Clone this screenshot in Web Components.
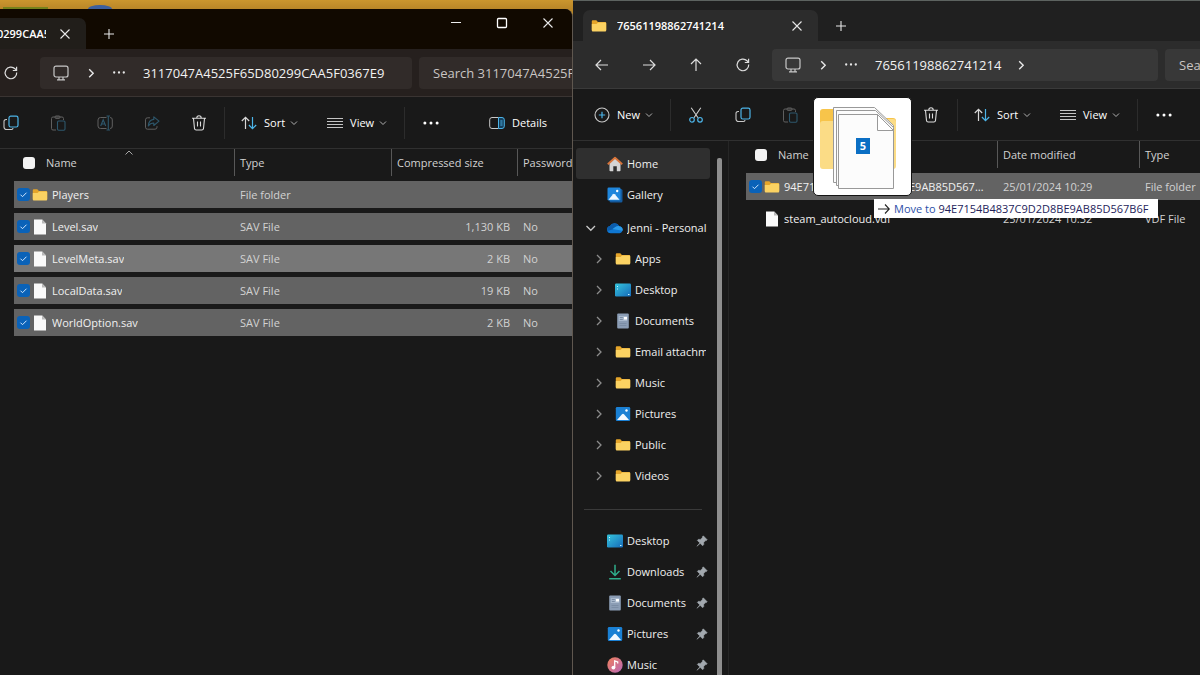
<!DOCTYPE html>
<html lang="en">
<head>
<meta charset="utf-8">
<title>File Explorer</title>
<style>
  html, body { height: 100%; margin: 0; }
  body { background: #191919; color: #e6e6e6; font: 11px/16px "Open Sans", "Noto Sans", sans-serif; overflow: hidden; }
</style>
</head>
<body>
<desktop-view></desktop-view>

<script>
const ICONS = {
  close: ['0 0 16 16', '<path d="M3.5 3.5l9 9M12.5 3.5l-9 9" stroke="#e8e8e8" stroke-width="1.1"/>'],
  plus: ['0 0 16 16', '<path d="M8 3v10M3 8h10" stroke="#e8e8e8" stroke-width="1.1"/>'],
  min: ['0 0 16 16', '<path d="M3 7.500h10" stroke="#eee" stroke-width="1.1"/>'],
  max: ['0 0 16 16', '<rect x="3.5" y="3.5" width="9" height="9" rx="1" stroke="#fff" stroke-width="1.3"/>'],
  back: ['0 0 16 16', '<path d="M14 8H2.5M7 3L2 8l5 5" stroke="#ddd" stroke-width="1.2"/>'],
  forward: ['0 0 16 16', '<path d="M2 8h11.500M9 3l5 5-5 5" stroke="#ddd" stroke-width="1.2"/>'],
  up: ['0 0 16 16', '<path d="M8 14V2.500M3 7l5-5 5 5" stroke="#ddd" stroke-width="1.2"/>'],
  refresh: ['0 0 16 16', '<path d="M13.700 7.500A5.800 5.800 0 1 1 12 3.800L13.500 5.300M13.600 1.700v3.800H9.800" stroke="#ddd" stroke-width="1.2"/>'],
  monitor: ['0 0 16 16', '<rect x="1" y="1.200" width="14" height="10.800" rx="2" stroke="#c8c8c8" stroke-width="1.200"/><path d="M6 12v2.500M10 12v2.500M4 14.900h8" stroke="#c8c8c8" stroke-width="1.200"/>'],
  crumb: ['0 0 16 16', '<path d="M6.200 4.200l4 4-4 4" stroke="#e8e8e8" stroke-width="1.400"/>'],
  dots: ['0 0 16 16', '<g fill="#e8e8e8"><circle cx="3.200" cy="7.500" r="1.150"/><circle cx="8" cy="7.500" r="1.150"/><circle cx="12.800" cy="7.500" r="1.150"/></g>'],
  more: ['0 0 16 16', '<g fill="#fff"><circle cx="1.900" cy="8" r="1.500"/><circle cx="8" cy="8" r="1.500"/><circle cx="14.100" cy="8" r="1.500"/></g>'],
  newitem: ['0 0 16 16', '<circle cx="8" cy="8" r="7" stroke="#c8c8c8" stroke-width="1.100"/><path d="M8 4.800v6.400M4.800 8h6.400" stroke="#4cb4e8" stroke-width="1.200"/>'],
  cut: ['0 0 16 16', '<path d="M3.200.8l6.800 9.900M12.800.8L6 10.700" stroke="#d0d0d0" stroke-width="1.100"/><circle cx="4" cy="12.800" r="2.300" stroke="#4cb4e8" stroke-width="1.200"/><circle cx="12" cy="12.800" r="2.300" stroke="#4cb4e8" stroke-width="1.200"/>'],
  copy: ['0 0 16 16', '<path d="M4 4.500H3A2 2 0 0 0 1 6.500V12a2.500 2.500 0 0 0 2.500 2.500h5A1.500 1.500 0 0 0 10 13" stroke="#c8c8c8" stroke-width="1.100"/><rect x="6" y="1.200" width="9" height="10.800" rx="1.800" stroke="#4cb4e8" stroke-width="1.200"/>'],
  paste: ['0 0 16 16', '<path d="M6 15H3a1.500 1.500 0 0 1-1.500-1.500V3.500A1.500 1.500 0 0 1 3 2h9a1.500 1.500 0 0 1 1.500 1.500V5" stroke="#c8c8c8"/><rect x="5" y="1" width="5" height="2.400" rx="1" stroke="#c8c8c8"/><rect x="7.500" y="6" width="7.500" height="9.200" rx="1.200" stroke="#4cb4e8" stroke-width="1.100"/>'],
  rename: ['0 0 16 16', '<path d="M9.500 2.500h-6A2.500 2.500 0 0 0 1 5v6a2.500 2.500 0 0 0 2.500 2.500h6M13 2.500A2.300 2.300 0 0 1 15.300 5v6a2.300 2.300 0 0 1-2.300 2.500" stroke="#c8c8c8"/><path d="M3.700 11L6.200 4.800 8.700 11M4.600 9h3.200M11.300 1v14M9.500 1h3.600M9.500 15h3.600" stroke="#4cb4e8" stroke-width="1.100"/>'],
  share: ['0 0 16 16', '<path d="M6 2.800H3.500A2 2 0 0 0 1.500 4.800v7.400a2 2 0 0 0 2 2H11a2 2 0 0 0 2-2v-1" stroke="#c8c8c8"/><path d="M9.800 1.800L15 6.200l-5.200 4.300V8C7 8 5.500 9 4.300 11 4.500 7 6.500 4.700 9.800 4.400z" stroke="#4cb4e8" stroke-width="1.100" stroke-linejoin="round"/>'],
  trash: ['0 0 16 16', '<path d="M1 3.300h14M5.800 3c0-3 4.400-3 4.400 0M2.500 3.500l1 10A1.700 1.700 0 0 0 5.200 15h5.600a1.700 1.700 0 0 0 1.700-1.500l1-10M6.500 6.500v5M9.500 6.500v5" stroke="#dcdcdc" stroke-width="1.100"/>'],
  sort: ['0 0 16 16', '<path d="M4.500 14V2.500M.8 6l3.700-3.700L8.200 6" stroke="#d8d8d8" stroke-width="1.200"/><path d="M11.500 2v11.500M7.900 10l3.600 3.700L15.200 10" stroke="#4cb4e8" stroke-width="1.200"/>'],
  view: ['0 0 16 16', '<path d="M0 3.500h16M0 6.500h16M0 9.500h16M0 12.500h16" stroke="#c4c4c4"/>'],
  details: ['0 0 16 16', '<path d="M9.500 2.500H3A2.300 2.300 0 0 0 .7 4.800v6.400A2.300 2.300 0 0 0 3 13.500h6.500" stroke="#c8c8c8"/><path d="M9.500 2.500H13a2.300 2.300 0 0 1 2.300 2.300v6.400a2.300 2.300 0 0 1-2.300 2.300H9.500z" stroke="#4cb4e8" fill="#153f5c"/><path d="M11.300 6h2.200M11.300 8h2.200M11.300 10h2.200" stroke="#4cb4e8"/>'],
  chevdown: ['0 0 8 8', '<path d="M1 2.500l3 3 3-3" stroke="#b0b0b0"/>'],
  sortup: ['0 0 8 8', '<path d="M.5 5.500L4 2l3.500 3.500" stroke="#a8a8a8"/>'],
  expand: ['0 0 16 16', '<path d="M6 4l4 4-4 4" stroke="#8c8c8c" stroke-width="1.300"/>'],
  collapse: ['0 0 16 16', '<path d="M3.500 6l4.300 4.300L12 6" stroke="#c8c8c8" stroke-width="1.300"/>'],
  folder: ['0 0 16 16', '<path d="M.8 3.200A1 1 0 0 1 1.800 2.200h3.500l1.600 1.700h7.300a1 1 0 0 1 1 1V12H.8z" fill="#e5a52a"/><path d="M.8 6.100h4.700l1.600-1.500h7.100a1 1 0 0 1 1 1v6.900a1 1 0 0 1-1 1H1.800a1 1 0 0 1-1-1z" fill="#fbd262"/>'],
  file: ['0 0 16 16', '<path d="M2 .6h8.200L14 4.500v10.900H2z" fill="#fafafa"/><path d="M10 .6v4h4z" fill="#b9b9b9"/>'],
  home: ['0 0 16 16', '<path d="M2.500 7L8 2.200 13.500 7v7.500a.8.8 0 0 1-.8.8H9.800v-5H6.300v5H3.300a.8.8 0 0 1-.8-.8z" fill="#d4d4d4"/><path d="M.8 8.200L8 1.700l7.200 6.500" stroke="#d8743a" stroke-width="1.900" stroke-linejoin="round"/>'],
  gallery: ['0 0 16 16', '<rect x="2.500" y="2" width="13" height="13.500" rx="1.500" fill="#145a9e"/><rect x=".5" y=".5" width="13" height="13" rx="1.200" fill="#1f86dc"/><path d="M1.500 12.700L6 7.200a1.200 1.200 0 0 1 1.800 0l4.700 5.500z" fill="#eef7ff"/><circle cx="10.200" cy="4" r="1.200" fill="#fff"/>'],
  cloud: ['0 0 16 16', '<path d="M3.700 13.300A3.700 3.700 0 0 1 2.900 6 5.300 5.300 0 0 1 12.300 6.200a3.600 3.600 0 0 1 .3 7.100z" fill="#0f77d2"/><path d="M2.900 6A5.300 5.300 0 0 1 12.300 6.200C9 6 7 8 5.800 9.200L.6 11C-.5 8.500.8 6.300 2.900 6z" fill="#0b5cab"/><path d="M5.500 9l3.200-2.300c1-.7 2.600-.8 3.600-.5a3.600 3.600 0 0 1 3.300 4.600z" fill="#2b9ae8"/>'],
  desktop: ['0 0 16 16', '<linearGradient id="g" x1="0" y1="0" x2="1" y2="1"><stop offset="0" stop-color="#36c5dd"/><stop offset="1" stop-color="#1569b8"/></linearGradient><rect y="1.500" width="16" height="13" rx="1.200" fill="url(#g)"/><path d="M2 4.500h1M2 7h1M13 12.500h1.500" stroke="#c5f6ff"/>'],
  documents: ['0 0 16 16', '<rect x="2.200" y=".5" width="11.600" height="15" rx="1" fill="#8b9db5"/><path d="M3.800 3h8.400v5H3.800z" fill="#a9b9cd"/><path d="M4.800 4.500h3M4.800 6.500h3M4.500 10.500h7M4.500 12.500h7" stroke="#7b8da5"/><rect x="9" y="4" width="3" height="2.500" fill="#fff"/>'],
  pictures: ['0 0 16 16', '<rect x=".8" y="1" width="14.400" height="14" rx="1.300" fill="#1a80d4"/><path d="M2 14l5-5.700a1.300 1.300 0 0 1 2 0l5 5.700z" fill="#f1f8ff"/><circle cx="11.500" cy="4.500" r="1.200" fill="#fff"/>'],
  downloads: ['0 0 16 16', '<path d="M8 .8v10.400M3.500 7L8 11.500 12.500 7M2.200 14.800h11.600" stroke="#2fae8b" stroke-width="1.500"/>'],
  music: ['0 0 16 16', '<linearGradient id="m" x1="0" y1="0" x2="1" y2="1"><stop offset="0" stop-color="#f0805a"/><stop offset="1" stop-color="#b868b8"/></linearGradient><circle cx="8" cy="8" r="7.700" fill="url(#m)"/><path d="M7.700 10.500V4l3 1v1.600" stroke="#fff" stroke-width="1.300"/><circle cx="6.400" cy="10.600" r="1.900" fill="#fff"/>'],
  pin: ['0 0 12 12', '<path d="M7.300.8l3.900 3.900-1 1-.5-.1-2 2 .1 2L6.600 10.800 4.200 8.400.9 11.300 3.800 7.900 1.300 5.400 2.400 4.300l2 .1 2-2L6.300 1.800z" fill="#a2a8ae" stroke="#a2a8ae" stroke-width=".5"/>'],
  move: ['0 0 12 12', '<path d="M0 6h11M7 1.500L11.300 6 7 10.500" stroke="#222" stroke-width="1.100"/>']
};

/* Registers an element whose shadow root is cloned from a template. */
function define(name, render) {
  customElements.define(name, class extends HTMLElement {
    constructor() { super(); this.attachShadow({ mode: 'open' }); }
    connectedCallback() {
      if (this.shadowRoot.childNodes.length) return;
      const t = document.createElement('template');
      t.innerHTML = render(this);
      this.shadowRoot.append(t.content.cloneNode(true));
    }
  });
}
const attr = (el, n, d = '') => el.getAttribute(n) ?? d;
const RESET = `*{box-sizing:border-box}
  button,input{font:inherit;color:inherit;background:none;border:0;padding:0;margin:0}
  a{color:inherit;text-decoration:none}`;

define('app-icon', el => {
  const [box, body] = ICONS[attr(el, 'name')];
  return `<style>
    :host{display:block;flex:none;width:var(--size,16px);height:var(--size,16px)}
    svg{display:block;width:100%;height:100%}
  </style><svg viewBox="${box}" fill="none" aria-hidden="true">${body}</svg>`;
});

define('window-tab', el => `<style>${RESET}
    :host{display:flex;align-items:center;height:31px;background:var(--tab);border-radius:7px 7px 0 0;padding:0 9px 0 8px}
    .title{margin-left:var(--title-gap,10px);font-weight:600;color:#fff;white-space:nowrap;overflow:hidden;flex:1}
    button{display:grid;place-items:center;width:24px;height:24px;margin-left:7px}
  </style>
  <slot></slot><span class="title">${attr(el, 'label')}</span>
  <button aria-label="Close tab"><app-icon name="close"></app-icon></button>`);

define('icon-button', el => `<style>${RESET}
    :host{display:block;flex:none}
    button{display:grid;place-items:center;width:var(--button-width,47px);height:var(--button-height,32px)}
    button:disabled{opacity:.4}
  </style>
  <button aria-label="${attr(el, 'label')}" ${el.hasAttribute('disabled') ? 'disabled' : ''}><app-icon name="${attr(el, 'icon')}"></app-icon></button>`);

define('menu-button', el => `<style>${RESET}
    :host{display:block;flex:none}
    button{display:flex;align-items:center;gap:7px;height:32px;padding:0 15px 0 14px;color:#fff}
    .chev{--size:8px;margin-left:-2px}
  </style>
  <button><app-icon name="${attr(el, 'icon')}"></app-icon><slot></slot>${el.hasAttribute('plain') ? '' : '<app-icon class="chev" name="chevdown"></app-icon>'}</button>`);

define('address-bar', el => `<style>${RESET}
    :host{display:flex;align-items:center;flex:1;min-width:0;height:32px;padding-left:13px;background:var(--field);border-radius:4px;font-size:13px;color:#f2f2f2;overflow:hidden}
    button{display:grid;place-items:center;flex:none;height:32px;width:28px}
    .pc,.tail{width:16px}
    .path{width:auto;padding:0 12px 0 10px}
    .first{margin-left:8px}
  </style>
  <button class="pc" aria-label="This PC"><app-icon name="monitor"></app-icon></button>
  <button class="first" aria-label="Folders"><app-icon name="crumb"></app-icon></button>
  <button aria-label="Hidden path"><app-icon name="dots"></app-icon></button>
  <button class="path">${attr(el, 'path')}</button>
  ${el.hasAttribute('more') ? '<button class="tail" aria-label="Subfolders"><app-icon name="crumb"></app-icon></button>' : ''}`);

define('search-field', el => `<style>${RESET}
    :host{display:block;flex:none;width:var(--search-width)}
    input{display:block;width:100%;height:32px;padding-left:14px;background:var(--field);border-radius:4px 0 0 4px;font-size:13px}
    input::placeholder{color:#c9c5c3;opacity:1}
  </style>
  <input type="text" aria-label="Search" placeholder="${attr(el, 'hint')}">`);

define('explorer-window', () => `<style>${RESET}
    :host{display:flex;flex-direction:column;min-width:0;min-height:0;overflow:hidden;background:#191919}
    .title{display:flex;align-items:flex-end;height:40px;flex:none;background:var(--title);padding-left:var(--tab-start)}
    .title .lead{display:flex;flex:1;align-items:center;margin-left:var(--off,0)}
    .add{display:grid;place-items:center;width:24px;height:24px;margin-left:11px}
    .controls{align-self:flex-start;display:flex;padding-right:1px;--button-width:46px;--button-height:28px}
    nav{display:flex;align-items:center;gap:7px;height:48px;flex:none;background:var(--bar);border-bottom:1px solid var(--line);padding-left:var(--nav-start,0)}
    .history{display:flex;margin-left:var(--off,0);margin-right:-1px}
    .tools{display:flex;align-items:center;height:52px;flex:none;border-bottom:1px solid #303030;padding-left:var(--tool-start,0)}
    .tools .row{display:flex;align-items:center;flex:1;margin-left:var(--off,0)}
    .body{display:flex;flex:1;min-height:0}
  </style>
  <header class="title"><div class="lead"><slot name="tab"></slot>
    <button class="add" aria-label="New tab"><app-icon name="plus"></app-icon></button></div>
    <div class="controls"><slot name="controls"></slot></div></header>
  <nav aria-label="Address"><div class="history"><slot name="history"></slot></div><slot name="address"></slot></nav>
  <div class="tools" role="toolbar"><div class="row"><slot name="tools"></slot></div></div>
  <div class="body"><slot></slot></div>`);

define('tool-divider', () => `<style>:host{display:block;flex:none;width:1px;height:32px;margin:0 2px;background:#2c2c2c}</style>`);

define('tree-item', el => `<style>${RESET}
    :host{display:block}
    a{display:flex;align-items:center;gap:4px;height:31px;padding-left:7px;overflow:hidden;white-space:nowrap;color:#f0f0f0;border-radius:3px}
    :host([nested]) a{padding:0 4px 0 15px}
    :host([current]) a{background:#2f2f2f}
    .twist{width:20px;flex:none}
    .text{flex:1;min-width:0;overflow:hidden}
    .pin{--size:12px;margin-right:2px}
  </style>
  <a href="#">
    <span class="twist">${attr(el, 'twist') ? `<app-icon name="${attr(el, 'twist')}"></app-icon>` : ''}</span>
    <app-icon name="${attr(el, 'icon')}"></app-icon><span class="text"><slot></slot></span>
    ${el.hasAttribute('pinned') ? '<app-icon class="pin" name="pin"></app-icon>' : ''}
  </a>`);

define('folder-tree', () => `<style>${RESET}
    :host{display:flex;flex:none;width:156px;padding-left:3px;border-right:1px solid #262626;overflow:hidden}
    nav{width:134px;padding-top:7px;flex:none}
    .group{margin-bottom:2px}
    hr{border:0;height:1px;background:#3a3a3a;margin:18px 8px 15px}
    .thumb{width:5px;margin:17px 0 0 7px;background:#8e8e8e;border-radius:2px 2px 0 0}
  </style>
  <nav aria-label="Folders">
    <div class="group"><slot name="top"></slot></div>
    <div class="group"><slot name="cloud"></slot></div>
    <hr>
    <slot name="pinned"></slot>
  </nav><div class="thumb"></div>`);

/* Data table: columns come from the "cols" attribute, rows from a JSON script child. */
define('file-table', el => {
  const cols = JSON.parse(attr(el, 'cols'));
  const rows = JSON.parse(el.querySelector('script').textContent);
  return `<style>${RESET}
    :host{display:block;flex:1;min-width:0;padding-left:var(--list-start);overflow:hidden}
    table{width:100%;table-layout:fixed;border-collapse:separate;border-spacing:0}
    th,td{height:32px;padding:0 7px 0 6px;border-bottom:5px solid transparent;background-clip:padding-box;text-align:left;font-weight:400;white-space:nowrap;overflow:hidden;color:#d2d2d2}
    th:first-child{padding-left:9px}
    td:first-child{padding-left:3px}
    th:last-child{padding-right:0}
    th+th{box-shadow:inset 1px 0 #585858}
    .head{position:relative;display:flex;align-items:center;gap:11px;margin-right:-7px}
    .head app-icon{--size:8px;position:absolute;left:50%;top:-6px;margin-left:-4px}
    td.num{text-align:right}
    .sel td{background-color:#636363}
    .hot td{background-color:#777}
    label{display:flex;align-items:center;color:#f0f0f0}
    label app-icon{margin:0 4px 0 2px}
    label span{overflow:hidden;text-overflow:ellipsis}
    input{appearance:none;width:13px;height:13px;flex:none;border-radius:3px}
    th input{width:12px;height:12px;background:#f3f3f3}
    td input:checked{background:#0a62b8 url("data:image/svg+xml,%3Csvg xmlns='http://www.w3.org/2000/svg' viewBox='0 0 13 13' fill='none'%3E%3Cpath d='M3.500 6.700l2 2 4-4' stroke='%23cfe6ff'/%3E%3C/svg%3E")}
  </style>
  <table>
    <colgroup>${cols.map(c => `<col${c[1] ? ` style="width:${c[1]}px"` : ''}>`).join('')}</colgroup>
    <thead><tr>${cols.map((c, i) => i ? `<th>${c[0]}</th>` : `<th><div class="head"><input type="checkbox" aria-label="Select all">${c[0]}${el.hasAttribute('sorted') ? '<app-icon name="sortup"></app-icon>' : ''}</div></th>`).join('')}</tr></thead>
    <tbody>${rows.map(r => `<tr class="${r.state || ''}">
      <td><label><input type="checkbox" ${r.state ? 'checked' : ''}><app-icon name="${r.icon}"></app-icon><span>${r.cells[0]}</span></label></td>
      ${r.cells.slice(1).map((c, i) => `<td class="${cols[i + 1][0] === 'Compressed size' ? 'num' : ''}">${c}</td>`).join('')}</tr>`).join('')}</tbody>
  </table>`;
});

/* Thumbnail and hint that follow the pointer during a drag. */
define('drag-preview', () => `<style>${RESET}
    :host{position:absolute;left:240px;top:97px}
    .card{width:99px;height:99px;background:#fff;border:1px solid #151515;border-radius:5px;display:grid;place-items:center;position:relative}
    .card svg{width:97px;height:97px;display:block}
    .count{position:absolute;left:42px;top:40px;width:14px;height:16px;background:#0b6fc4;color:#fff;font-weight:700;text-align:center}
    .hint{display:flex;align-items:center;gap:4px;width:max-content;margin:3px 0 0 61px;height:19px;padding:0 10px 0 4px;background:#fff;color:#24235a;white-space:nowrap}
    .hint b{font-weight:400;color:#2c4fa8}
    app-icon{--size:12px}
  </style>
  <div class="card"><svg viewBox="0 0 97 97" fill="none" aria-hidden="true">
    <path d="M6 14a3 3 0 0 1 3-3h20l8 9h42a3 3 0 0 1 3 3v45H6z" fill="#f7c44a"/>
    <path d="M6 26a3 3 0 0 1 3-3h20l8-2h42a3 3 0 0 1 3 3v44a3 3 0 0 1-3 3H9a3 3 0 0 1-3-3z" fill="#fbdc86"/>
    <g fill="#fcfcfc" stroke="#999" stroke-width="1"><path d="M19.500 9.500h41l19 18v57h-60z"/><path d="M22.500 12.500h39l18 17v58h-57z"/><path d="M24.500 16.500h39l16 16v58h-55z"/></g>
    <path d="M63.500 16.500v16h16z" fill="#fff" stroke="#999"/>
  </svg><span class="count">5</span></div>
  <div class="hint"><app-icon name="move"></app-icon><span><b>Move to</b> 94E7154B4837C9D2D8BE9AB85D567B6F</span></div>`);

define('desktop-view', () => `<style>${RESET}
    :host{display:grid;grid-template-columns:573fr 627fr;height:100vh;overflow:hidden;background:#c38f2c}
    .left{display:flex;min-width:0;min-height:0;padding-top:9px;position:relative;background:linear-gradient(#cb962e,#b98628 9px)}
    .left::before{content:"";position:absolute;left:3px;top:7px;width:45px;height:2px;background:#75821b}
    .left::after{content:"";position:absolute;left:88px;top:5px;width:24px;height:4px;border-radius:50% 50% 0 0 / 100% 100% 0 0;background:#3c5f9e}
    .left explorer-window{flex:1;border-right:1px solid #5f574f;border-radius:0 8px 0 0;
      --title:#110900;--tab:#211e1a;--bar:#26201e;--field:#312b29;--line:#3a3432;--off:-13px;--tab-start:0px;--title-gap:2px;--search-width:153px;--list-start:14px}
    .left window-tab{width:99px}
    .left .wide{margin-left:auto;margin-right:10px}
    .right{display:flex;min-width:0;min-height:0;position:relative}
    .right explorer-window{flex:1;border-top:1px solid #5d6360;
      --title:#202020;--tab:#2c2c2c;--bar:#2c2c2c;--field:#383838;--line:#3a3a3a;--tab-start:10px;--nav-start:5px;--tool-start:7px;--search-width:35px;--list-start:17px}
    .right explorer-window{margin-top:0}
    .right window-tab{width:235px}
  </style>
  <div class="left"><explorer-window>
    <window-tab slot="tab" label="0299CAA5F0367E9"></window-tab>
    <icon-button slot="controls" icon="min" label="Minimise"></icon-button>
    <icon-button slot="controls" icon="max" label="Maximise"></icon-button>
    <icon-button slot="controls" icon="close" label="Close"></icon-button>
    <icon-button slot="history" icon="refresh" label="Refresh"></icon-button>
    <address-bar slot="address" path="3117047A4525F65D80299CAA5F0367E9"></address-bar>
    <search-field slot="address" hint="Search 3117047A4525F65D80299CAA5F0367E9"></search-field>
    <icon-button slot="tools" icon="copy" label="Copy"></icon-button>
    <icon-button slot="tools" icon="paste" label="Paste" disabled></icon-button>
    <icon-button slot="tools" icon="rename" label="Rename" disabled></icon-button>
    <icon-button slot="tools" icon="share" label="Share" disabled></icon-button>
    <icon-button slot="tools" icon="trash" label="Delete"></icon-button>
    <tool-divider slot="tools"></tool-divider>
    <menu-button slot="tools" icon="sort">Sort</menu-button>
    <menu-button slot="tools" icon="view">View</menu-button>
    <tool-divider slot="tools"></tool-divider>
    <icon-button slot="tools" icon="more" label="More"></icon-button>
    <menu-button slot="tools" class="wide" icon="details" plain>Details</menu-button>
    <file-table sorted cols='[["Name",220],["Type",157],["Compressed size",126],["Password",0]]'>
      <script type="application/json">[
        {"state":"sel","icon":"folder","cells":["Players","File folder","",""]},
        {"state":"sel","icon":"file","cells":["Level.sav","SAV File","1,130 KB","No"]},
        {"state":"hot","icon":"file","cells":["LevelMeta.sav","SAV File","2 KB","No"]},
        {"state":"sel","icon":"file","cells":["LocalData.sav","SAV File","19 KB","No"]},
        {"state":"sel","icon":"file","cells":["WorldOption.sav","SAV File","2 KB","No"]}
      ]<\/script>
    </file-table>
  </explorer-window></div>
  <div class="right"><explorer-window>
    <window-tab slot="tab" label="76561198862741214"><app-icon name="folder"></app-icon></window-tab>
    <icon-button slot="history" icon="back" label="Back"></icon-button>
    <icon-button slot="history" icon="forward" label="Forward"></icon-button>
    <icon-button slot="history" icon="up" label="Up"></icon-button>
    <icon-button slot="history" icon="refresh" label="Refresh"></icon-button>
    <address-bar slot="address" path="76561198862741214" more></address-bar>
    <search-field slot="address" hint="Search 76561198862741214"></search-field>
    <menu-button slot="tools" icon="newitem">New</menu-button>
    <tool-divider slot="tools"></tool-divider>
    <icon-button slot="tools" icon="cut" label="Cut"></icon-button>
    <icon-button slot="tools" icon="copy" label="Copy"></icon-button>
    <icon-button slot="tools" icon="paste" label="Paste" disabled></icon-button>
    <icon-button slot="tools" icon="rename" label="Rename"></icon-button>
    <icon-button slot="tools" icon="share" label="Share"></icon-button>
    <icon-button slot="tools" icon="trash" label="Delete"></icon-button>
    <tool-divider slot="tools"></tool-divider>
    <menu-button slot="tools" icon="sort">Sort</menu-button>
    <menu-button slot="tools" icon="view">View</menu-button>
    <tool-divider slot="tools"></tool-divider>
    <icon-button slot="tools" icon="more" label="More"></icon-button>
    <folder-tree>
      <tree-item slot="top" icon="home" current>Home</tree-item>
      <tree-item slot="top" icon="gallery">Gallery</tree-item>
      <tree-item slot="cloud" icon="cloud" twist="collapse">Jenni - Personal</tree-item>
      <tree-item slot="cloud" nested twist="expand" icon="folder">Apps</tree-item>
      <tree-item slot="cloud" nested twist="expand" icon="desktop">Desktop</tree-item>
      <tree-item slot="cloud" nested twist="expand" icon="documents">Documents</tree-item>
      <tree-item slot="cloud" nested twist="expand" icon="folder">Email attachments</tree-item>
      <tree-item slot="cloud" nested twist="expand" icon="folder">Music</tree-item>
      <tree-item slot="cloud" nested twist="expand" icon="pictures">Pictures</tree-item>
      <tree-item slot="cloud" nested twist="expand" icon="folder">Public</tree-item>
      <tree-item slot="cloud" nested twist="expand" icon="folder">Videos</tree-item>
      <tree-item slot="pinned" icon="desktop" pinned>Desktop</tree-item>
      <tree-item slot="pinned" icon="downloads" pinned>Downloads</tree-item>
      <tree-item slot="pinned" icon="documents" pinned>Documents</tree-item>
      <tree-item slot="pinned" icon="pictures" pinned>Pictures</tree-item>
      <tree-item slot="pinned" icon="music" pinned>Music</tree-item>
    </folder-tree>
    <file-table cols='[["Name",251],["Date modified",142],["Type",0]]'>
      <script type="application/json">[
        {"state":"sel","icon":"folder","cells":["94E7154B4837C9D2D8BE9AB85D567B6F","25/01/2024 10:29","File folder"]},
        {"state":"","icon":"file","cells":["steam_autocloud.vdf","25/01/2024 10:32","VDF File"]}
      ]<\/script>
    </file-table>
  </explorer-window><drag-preview></drag-preview></div>`);
</script>
</body>
</html>
